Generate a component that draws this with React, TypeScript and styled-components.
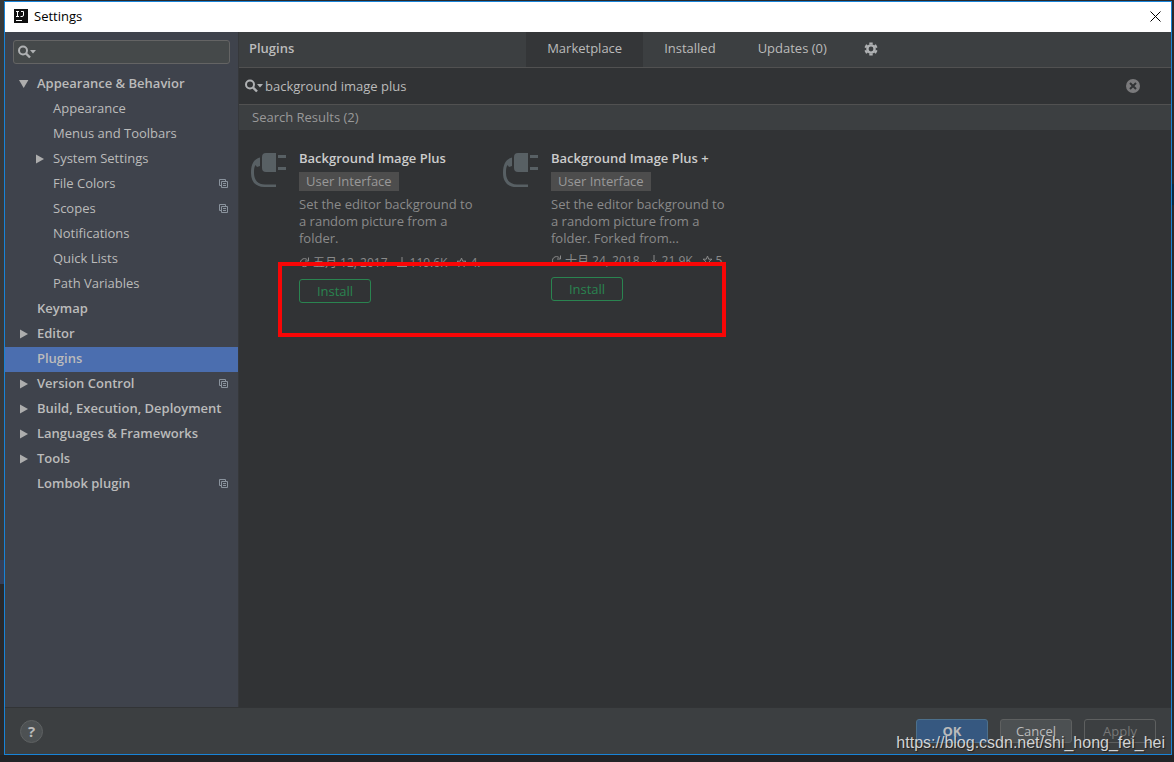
import React from "react";
import styled, { createGlobalStyle } from "styled-components";

const GlobalStyle = createGlobalStyle`
  *, *::before, *::after { box-sizing: border-box; }
  body {
    margin: 0;
    background: #2b2b2b;
    color: #bbbbbb;
    font: 13px/17px "Open Sans", "Noto Sans CJK SC", sans-serif;
  }
  button, input { font: inherit; color: inherit; }
  button { padding: 0; border: 0; background: none; cursor: pointer; }
  svg { display: block; flex: none; }
`;

/* The editor behind the dialog shows along the edges. */
const Desktop = styled.div`
  display: flex;
  min-height: 100vh;
  padding: 1px 2px 7px 4px;
  background:
    linear-gradient(#222326, #222326) bottom / 100% 7px no-repeat,
    linear-gradient(#0d293e, #0d293e) right 184px / 2px 21px no-repeat,
    linear-gradient(#34405a, #34405a) left 560px / 4px 24px no-repeat,
    linear-gradient(#36393b, #36393b) left top / 4px 560px no-repeat,
    #29292b;
`;

const Dialog = styled.div`
  flex: 1;
  min-width: 0;
  display: flex;
  flex-direction: column;
  border: 1px solid #1883d7;
  background: #3c3f41;
`;

const TitleBar = styled.header`
  display: flex;
  align-items: center;
  height: 30px;
  padding: 0 10px 2px 9px;
  gap: 6px;
  background: #ffffff;
  color: #000000;
`;

const TitleText = styled.h1`
  flex: 1;
  margin: 0;
  font-size: 13px;
  font-weight: 400;
`;

const Body = styled.div`
  flex: 1;
  display: flex;
`;

const Sidebar = styled.aside`
  width: 234px;
  flex: none;
  padding-top: 8px;
  border-right: 1px solid #36383b;
  background: #3f434c;
`;

const SideSearch = styled.label`
  display: flex;
  align-items: center;
  height: 24px;
  margin: 0 8px 8px;
  padding-left: 4px;
  border: 1px solid #646464;
  border-radius: 3px;
  background: #45494a;
`;

const TextInput = styled.input`
  flex: 1;
  min-width: 0;
  padding: 0;
  border: 0;
  outline: 0;
  background: transparent;
`;

const Tree = styled.nav`
  display: flex;
  flex-direction: column;
`;

const TreeRow = styled.button<{ $child?: boolean; $selected?: boolean }>`
  display: flex;
  align-items: center;
  height: 25px;
  padding: 0 9px 2px ${(p) => (p.$child ? 30 : 14)}px;
  background: ${(p) => (p.$selected ? "#4b6eaf" : "transparent")};
  font-weight: ${(p) => (p.$child ? 400 : 600)};
  text-align: left;
  white-space: nowrap;
`;

const ArrowSlot = styled.span`
  width: 18px;
  flex: none;
`;

const TreeLabel = styled.span`
  flex: 1;
`;

const Main = styled.main`
  flex: 1;
  min-width: 0;
  display: flex;
  flex-direction: column;
  background: #313335;
`;

const Header = styled.div`
  display: grid;
  grid-template-columns: 1fr auto 1fr;
  height: 36px;
  padding-left: 10px;
  padding-right: 10px;
  border-bottom: 1px solid #515151;
  background: #3c3f41;
`;

const HeaderTitle = styled.h2`
  margin: 0;
  padding-bottom: 2px;
  align-self: center;
  font-size: 13px;
  font-weight: 600;
`;

const Tabs = styled.div`
  display: flex;
`;

const Tab = styled.button<{ $active?: boolean }>`
  padding: 0 21px 2px;
  background: ${(p) => (p.$active ? "#343638" : "transparent")};
`;

const GearButton = styled.button`
  display: flex;
  align-items: center;
  padding: 0 6px 2px 16px;
`;

const SearchBar = styled.label`
  display: flex;
  align-items: center;
  height: 37px;
  padding: 0 31px 0 6px;
  border-bottom: 1px solid #515151;
`;

const ResultsBar = styled.div`
  height: 25px;
  padding: 4px 13px;
  background: #3c3f41;
  color: #999999;
`;

const Results = styled.div`
  position: relative;
  flex: 1;
  display: flex;
  align-items: flex-start;
  gap: 16px;
  padding: 20px 12px;
`;

const Card = styled.article`
  display: flex;
  align-items: flex-start;
  gap: 12px;
  width: 236px;
`;

const CardIcon = styled.div`
  padding-top: 3px;
`;

const CardText = styled.div`
  display: flex;
  flex-direction: column;
  align-items: flex-start;
  width: 184px;
`;

const CardTitle = styled.h3`
  margin: 0 0 5px;
  font-size: 13px;
  font-weight: 600;
  color: #cccccc;
`;

const Tag = styled.span`
  padding: 1px 7px;
  background: #4d4d4d;
  color: #999999;
`;

const Description = styled.p`
  width: 178px;
  margin: 5px 0 0;
  color: #8a8a8a;
`;

const Meta = styled.div<{ $tall?: boolean }>`
  display: flex;
  align-items: center;
  gap: 9px;
  height: ${(p) => (p.$tall ? 20 : 18)}px;
  margin-top: 5px;
  padding-bottom: ${(p) => (p.$tall ? 0 : 2)}px;
  color: #8a8a8a;
  font-size: 12px;
  white-space: nowrap;
`;

const MetaItem = styled.span`
  display: flex;
  align-items: center;
  gap: 3px;
`;

const InstallButton = styled.button`
  width: 72px;
  height: 24px;
  margin-top: 7px;
  border: 1px solid #2a8450;
  border-radius: 3px;
  color: #2a8450;
`;

const Highlight = styled.div`
  position: absolute;
  left: 39px;
  top: 132px;
  width: 448px;
  height: 75px;
  border: 4px solid #f80606;
  pointer-events: none;
`;

const Footer = styled.footer`
  position: relative;
  display: flex;
  align-items: center;
  gap: 12px;
  height: 47px;
  padding: 0 15px;
  border-top: 1px solid #323436;
`;

const HelpButton = styled.button`
  width: 23px;
  height: 23px;
  margin-right: auto;
  border: 1px solid #5e6162;
  border-radius: 50%;
  background: #4d5153;
  font-size: 15px;
  font-weight: 700;
`;

const ActionButton = styled.button<{ $kind?: "primary" | "disabled" }>`
  width: 72px;
  height: 24px;
  border: 1px solid ${(p) => (p.$kind === "primary" ? "#4c708c" : "#5e6060")};
  border-radius: 3px;
  background: ${(p) =>
    p.$kind === "primary" ? "#365880" : p.$kind === "disabled" ? "transparent" : "#4c5052"};
  color: ${(p) => (p.$kind === "disabled" ? "#777777" : "#bbbbbb")};
  font-weight: ${(p) => (p.$kind === "primary" ? 700 : 400)};
`;

const Watermark = styled.span`
  position: absolute;
  right: 6px;
  bottom: 2px;
  color: #d2d3d4;
  font: 16px/18px "Liberation Sans", sans-serif;
  text-shadow: 1px 1px 1px rgba(0, 0, 0, 0.5);
  pointer-events: none;
`;

const SearchIcon = () => (
  <svg width="20" height="14" viewBox="0 0 20 14" fill="none">
    <circle cx="5" cy="5.500" r="4" stroke="#afb1b3" strokeWidth="2" />
    <path d="M8 8.500 12 12.500" stroke="#afb1b3" strokeWidth="2.400" />
    <path d="M12 5h6l-3 3.600z" fill="#afb1b3" />
  </svg>
);

const Arrow = ({ open }: { open?: boolean }) => (
  <svg width="10" height="10" viewBox="0 0 10 10" fill="#adadad">
    <path d={open ? "M0 1h9.400L4.700 9z" : "M1 .5 9 5 1 9.500z"} />
  </svg>
);

const CopyIcon = () => (
  <svg width="10" height="10" viewBox="0 0 10 10" fill="none" stroke="#8a939d">
    <path d="M2 6.500H.5V.5h6V2" />
    <path d="M2.500 2.500h6v6h-6zM4 4.500h3M4 6.500h3" />
  </svg>
);

const PlugIcon = () => (
  <svg width="36" height="36" viewBox="0 0 36 36" fill="#586064">
    <path d="M15 0h10v19H15q-4 0-4-4V4q0-4 4-4zM27 2h8v3h-8zM27 14h8v3h-8z" />
    <path d="M9 4.500V13L6 14 4.500 12C3 14 3 17 3 20c0 7 4 11.500 11 11.500h11v2.500H13C5 34 0 29 0 20 0 11 3 6 9 4.500z" />
  </svg>
);

const LogoIcon = () => (
  <svg width="14" height="14" viewBox="0 0 14 14">
    <path d="M0 0h14v14H0z" fill="#101010" />
    <path
      d="M2 2.500h3M3.500 2.500v5M2 7.500h3M7 2.500h2.500v3.500q0 1.500-1.500 1.500H6.500M2 11.500h6"
      stroke="#ffffff"
      fill="none"
    />
  </svg>
);

const GearIcon = () => (
  <svg width="14" height="14" viewBox="0 0 14 14" fill="none" stroke="#afb1b3">
    <circle cx="7" cy="7" r="3.600" strokeWidth="2.400" />
    <path
      d="M7 .6v2M7 11.400v2M1.300 3.700l1.800 1M10.900 9.300l1.800 1M1.300 10.300l1.800-1M10.900 4.700l1.800-1"
      strokeWidth="3.400"
    />
  </svg>
);

const RefreshIcon = () => (
  <svg width="11" height="11" viewBox="0 0 11 11" fill="none" stroke="#8a8a8a">
    <path d="M8.500 8.200A4 4 0 1 1 8.500 3M9.500.5v3.500H6" />
  </svg>
);

const DownloadIcon = ({ tray }: { tray?: boolean }) => (
  <svg width="10" height="11" viewBox="0 0 10 11" fill="none" stroke="#8a8a8a">
    <path d={tray ? "M5 0v8M2.500 5.500 5 8l2.500-2.500M0 9.500h10" : "M5 0v8M2.500 5.500 5 8l2.500-2.500"} />
  </svg>
);

const StarIcon = () => (
  <svg width="11" height="11" viewBox="0 0 11 11" fill="none" stroke="#8a8a8a">
    <path d="M5.500 1 6.700 4.200H10L7.400 6.200l1 3.300-2.900-2-2.900 2 1-3.300L1 4.200h3.300z" />
  </svg>
);

type Item = {
  label: string;
  child?: boolean;
  arrow?: "open" | "closed";
  copy?: boolean;
  selected?: boolean;
};

const items: Item[] = [
  { label: "Appearance & Behavior", arrow: "open" },
  { label: "Appearance", child: true },
  { label: "Menus and Toolbars", child: true },
  { label: "System Settings", child: true, arrow: "closed" },
  { label: "File Colors", child: true, copy: true },
  { label: "Scopes", child: true, copy: true },
  { label: "Notifications", child: true },
  { label: "Quick Lists", child: true },
  { label: "Path Variables", child: true },
  { label: "Keymap" },
  { label: "Editor", arrow: "closed" },
  { label: "Plugins", selected: true },
  { label: "Version Control", arrow: "closed", copy: true },
  { label: "Build, Execution, Deployment", arrow: "closed" },
  { label: "Languages & Frameworks", arrow: "closed" },
  { label: "Tools", arrow: "closed" },
  { label: "Lombok plugin", copy: true },
];

const plugins = [
  {
    name: "Background Image Plus",
    text: "Set the editor background to a random picture from a folder.",
    date: "五月 12, 2017",
    downloads: "119.6K",
    rating: "4.",
    tall: true,
  },
  {
    name: "Background Image Plus +",
    text: "Set the editor background to a random picture from a folder. Forked from...",
    date: "十月 24, 2018",
    downloads: "21.9K",
    rating: "5",
    tall: false,
  },
];

export default function App() {
  return (
    <Desktop>
      <GlobalStyle />
      <Dialog>
        <TitleBar>
          <LogoIcon />
          <TitleText>Settings</TitleText>
          <button aria-label="Close">
            <svg width="11" height="11" viewBox="0 0 11 11" stroke="#000000">
              <path d="M.5.5l10 10M10.500.5l-10 10" />
            </svg>
          </button>
        </TitleBar>
        <Body>
          <Sidebar>
            <SideSearch>
              <SearchIcon />
              <TextInput aria-label="Search settings" />
            </SideSearch>
            <Tree>
              {items.map((item) => (
                <TreeRow key={item.label} $child={item.child} $selected={item.selected}>
                  <ArrowSlot>{item.arrow && <Arrow open={item.arrow === "open"} />}</ArrowSlot>
                  <TreeLabel>{item.label}</TreeLabel>
                  {item.copy && <CopyIcon />}
                </TreeRow>
              ))}
            </Tree>
          </Sidebar>
          <Main>
            <Header>
              <HeaderTitle>Plugins</HeaderTitle>
              <Tabs>
                <Tab $active>Marketplace</Tab>
                <Tab>Installed</Tab>
                <Tab>Updates (0)</Tab>
                <GearButton aria-label="Plugin options">
                  <GearIcon />
                </GearButton>
              </Tabs>
            </Header>
            <SearchBar>
              <SearchIcon />
              <TextInput aria-label="Search plugins" defaultValue="background image plus" />
              <button aria-label="Clear search">
                <svg width="14" height="14" viewBox="0 0 14 14">
                  <circle cx="7" cy="7" r="7" fill="#7a7a7c" />
                  <path d="M4 4l6 6M10 4l-6 6" stroke="#313335" strokeWidth="2" />
                </svg>
              </button>
            </SearchBar>
            <ResultsBar>Search Results (2)</ResultsBar>
            <Results>
              {plugins.map((plugin) => (
                <Card key={plugin.name}>
                  <CardIcon>
                    <PlugIcon />
                  </CardIcon>
                  <CardText>
                    <CardTitle>{plugin.name}</CardTitle>
                    <Tag>User Interface</Tag>
                    <Description>{plugin.text}</Description>
                    <Meta $tall={plugin.tall}>
                      <MetaItem>
                        <RefreshIcon />
                        {plugin.date}
                      </MetaItem>
                      <MetaItem>
                        <DownloadIcon tray={plugin.tall} />
                        {plugin.downloads}
                      </MetaItem>
                      <MetaItem>
                        <StarIcon />
                        {plugin.rating}
                      </MetaItem>
                    </Meta>
                    <InstallButton>Install</InstallButton>
                  </CardText>
                </Card>
              ))}
              <Highlight />
            </Results>
          </Main>
        </Body>
        <Footer>
          <HelpButton aria-label="Help">?</HelpButton>
          <ActionButton $kind="primary">OK</ActionButton>
          <ActionButton>Cancel</ActionButton>
          <ActionButton $kind="disabled">Apply</ActionButton>
          <Watermark>https://blog.csdn.net/shi_hong_fei_hei</Watermark>
        </Footer>
      </Dialog>
    </Desktop>
  );
}
